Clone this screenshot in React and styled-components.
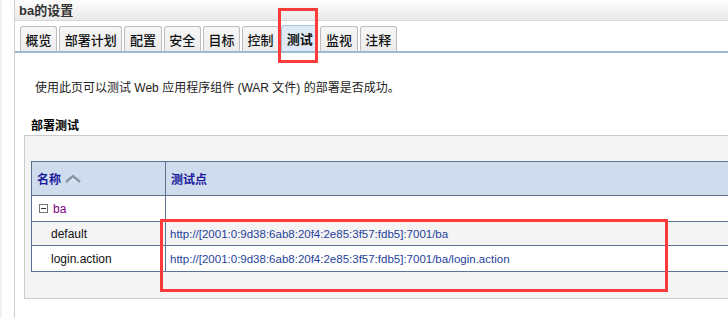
import React from 'react';
import styled, { createGlobalStyle } from 'styled-components';

const GlobalStyle = createGlobalStyle`
  html, body {
    margin: 0;
    padding: 0;
    background: #ffffff;
  }
  body {
    width: 728px;
    height: 318px;
    overflow: hidden;
    font-family: Tahoma, "Liberation Sans", "Noto Sans CJK SC", sans-serif;
    font-size: 12px;
    color: #000;
  }
`;

const Page = styled.div`
  position: relative;
  display: flex;
  width: 728px;
  height: 318px;
  overflow: hidden;
`;

const Gutter = styled.div`
  width: 14px;
  flex: none;
  border-right: 1px solid #cfcfcf;
  background: linear-gradient(to right, #fafafa 0, #e6e6e6 1px, #ffffff 2px);
`;

const Main = styled.div`
  flex: 1;
  min-width: 0;
  overflow: hidden;
`;

const Header = styled.div`
  height: 21px;
  box-sizing: border-box;
  padding: 3px 0 0 4px;
  background: linear-gradient(#fdfdfd, #e9e9e8);
  border-bottom: 1px solid #d6d6d6;
  font-size: 13px;
  font-weight: bold;
  color: #333;
  line-height: 16px;
`;

const TabBar = styled.div`
  display: flex;
  gap: 2px;
  padding: 5px 0 0 5px;
  border-bottom: 2px solid #9bbbd3;
  height: 25px;
`;

const Tab = styled.div`
  box-sizing: border-box;
  padding: 0 4.6px;
  margin-top: ${p => (p.$active ? -1 : 0)}px;
  height: ${p => (p.$active ? 26 : 25)}px;
  display: flex;
  align-items: center;
  border: 1px solid ${p => (p.$active ? '#a9c3da' : '#bdbdbd')};
  border-bottom: none;
  border-radius: 3px 3px 0 0;
  background: ${p => (p.$active ? '#dde9f4' : 'linear-gradient(#f7f7f7, #ececec)')};
  font-family: "Noto Sans CJK SC", sans-serif;
  font-size: 13px;
  font-weight: ${p => (p.$active ? 700 : 500)};
  color: #111;
`;

const Content = styled.div`
  padding: 27px 0 0 9px;
`;

const Description = styled.p`
  margin: 0 0 0 11px;
  font-family: Tahoma, "Liberation Sans", "Noto Sans CJK SC", sans-serif;
  font-size: 12px;
  line-height: 16px;
  color: #222;
`;

const SectionTitle = styled.h3`
  margin: 21px 0 0 7px;
  font-family: "Noto Sans CJK SC", sans-serif;
  font-size: 12px;
  font-weight: 700;
  line-height: 16px;
  height: 18px;
`;

const Box = styled.div`
  width: 760px;
  box-sizing: border-box;
  border: 1px solid #cbcbcb;
  background: #f4f4f4;
  padding: 25px 0 26px 6px;
`;

const Table = styled.div`
  display: grid;
  grid-template-columns: 133px 1fr;
  border: 1px solid #5b7393;
  border-right: none;
`;

const HeadCell = styled.div`
  height: 34px;
  box-sizing: border-box;
  display: flex;
  align-items: center;
  gap: 4px;
  padding-left: 5px;
  background: #cfdcee;
  border-bottom: 1px solid #5b7393;
  border-left: ${p => (p.$first ? 'none' : '1px solid #5b7393')};
  font-family: "Noto Sans CJK SC", sans-serif;
  font-size: 12px;
  font-weight: 700;
  color: #1a1a9a;
`;

const Cell = styled.div`
  height: ${p => p.$h}px;
  box-sizing: border-box;
  display: flex;
  align-items: center;
  gap: 5px;
  padding-left: ${p => p.$indent}px;
  background: ${p => (p.$shade ? '#f4f4f4' : '#ffffff')};
  border-bottom: ${p => (p.$last ? 'none' : '1px solid #5b7393')};
  border-left: ${p => (p.$first ? 'none' : '1px solid #5b7393')};
  font-size: 12px;
  color: ${p => p.$color || '#111'};
  white-space: nowrap;
`;

const Link = styled.span`
  color: #1f3f9c;
  font-size: 11.5px;
`;

const Toggle = styled.span`
  width: 9px;
  height: 9px;
  box-sizing: border-box;
  border: 1px solid #777;
  background: #fff;
  position: relative;
  flex: none;
  &::after {
    content: '';
    position: absolute;
    left: 1px;
    right: 1px;
    top: 3px;
    height: 1px;
    background: #333;
  }
`;

const Mark = styled.div`
  position: absolute;
  left: ${p => p.$x}px;
  top: ${p => p.$y}px;
  width: ${p => p.$w}px;
  height: ${p => p.$h}px;
  box-sizing: border-box;
  border: 3px solid #ff3a3a;
  pointer-events: none;
`;

const SortIcon = () => (
  <svg width="16" height="10" viewBox="0 0 16 10">
    <path d="M1 8 L8 2 L15 8" fill="none" stroke="#8a96a8" strokeWidth="2.4" />
    <path d="M4 8.5 L8 5 L12 8.5" fill="none" stroke="#e4eaf2" strokeWidth="1.2" />
  </svg>
);

const tabs = ['概览', '部署计划', '配置', '安全', '目标', '控制', '测试', '监视', '注释'];

const base = 'http://[2001:0:9d38:6ab8:20f4:2e85:3f57:fdb5]:7001/ba';

const rows = [
  { name: 'default', url: base, h: 24, shade: true },
  { name: 'login.action', url: base + '/login.action', h: 25, shade: false, last: true },
];

export default function App() {
  return (
    <>
      <GlobalStyle />
      <Page>
        <Gutter />
        <Main>
          <Header>ba的设置</Header>
          <TabBar>
            {tabs.map(t => (
              <Tab key={t} $active={t === '测试'}>{t}</Tab>
            ))}
          </TabBar>
          <Content>
            <Description>使用此页可以测试 Web 应用程序组件 (WAR 文件) 的部署是否成功。</Description>
            <SectionTitle>部署测试</SectionTitle>
            <Box>
              <Table>
                <HeadCell $first>
                  名称 <SortIcon />
                </HeadCell>
                <HeadCell>测试点</HeadCell>
                <Cell $first $h={26} $indent={7} $color="#800080">
                  <Toggle /> ba
                </Cell>
                <Cell $h={26} $indent={4} />
                {rows.map(r => (
                  <React.Fragment key={r.name}>
                    <Cell $first $h={r.h} $indent={19} $shade={r.shade} $last={r.last}>
                      {r.name}
                    </Cell>
                    <Cell $h={r.h} $indent={4} $shade={r.shade} $last={r.last}>
                      <Link>{r.url}</Link>
                    </Cell>
                  </React.Fragment>
                ))}
              </Table>
            </Box>
          </Content>
        </Main>
        <Mark $x={278} $y={8} $w={40} $h={55} />
        <Mark $x={160} $y={219} $w={508} $h={73} />
      </Page>
    </>
  );
}
